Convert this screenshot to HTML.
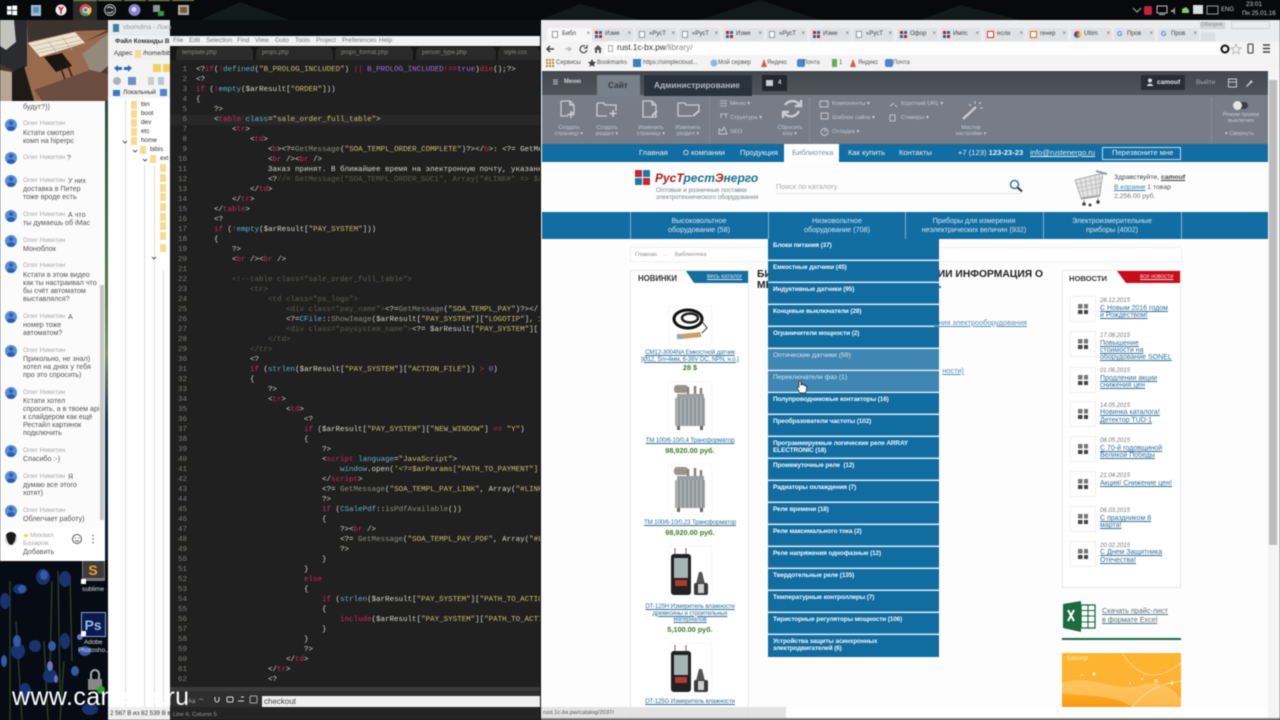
<!DOCTYPE html>
<html lang="ru">
<head>
<meta charset="utf-8">
<title>Screen</title>
<style>
html,body{margin:0;padding:0;width:1280px;height:720px;overflow:hidden;background:#0b0f10}
body{font-family:"Liberation Sans","Noto Sans CJK JP",sans-serif;position:relative}
.b{position:absolute;display:block}
.t{position:absolute;white-space:nowrap;line-height:8px;font-size:7px}
.c{transform:translateX(-50%);text-align:center}
#wrap{position:absolute;left:0;top:0;width:1280px;height:720px;overflow:hidden;filter:blur(.4px)}
/* chat */
.n{color:#a6a6a6;font-size:6.6px}
.m{color:#555;font-size:7.1px}
.av{position:absolute;left:5px;width:12px;height:12px;border-radius:50%;background:#5b8fd8;overflow:hidden}
.av:before{content:"";position:absolute;left:4px;top:2px;width:4px;height:4px;border-radius:50%;background:#2d5fb0}
.av:after{content:"";position:absolute;left:2px;top:7px;width:8px;height:6px;border-radius:50%;background:#2d5fb0}
/* folder */
.f{position:absolute;width:6px;height:8px;background:#f6dc92}
/* code */
#code{position:absolute;left:196px;top:65px;margin:0;font:7.5px/10px "Liberation Mono","Noto Sans CJK JP",monospace;color:#d6d6cc;white-space:pre;width:344px;height:625px;overflow:hidden}
#nums{position:absolute;left:170px;top:65px;width:17px;margin:0;font:7.5px/10px "Liberation Mono",monospace;color:#7b7b74;text-align:right;white-space:pre}
#code i{font-style:normal}
.r{color:#d9245c}.y{color:#c6c06e}.k{color:#5cb4c8}.p{color:#9a6fd8}.g{color:#5c5c53}.w{color:#8e8e84}
.tab{position:absolute;top:47px;height:13px;background:#2a2a2a;border-radius:5px 5px 0 0;color:#8a8a82;font-size:6px;line-height:13px;padding-left:6px;box-sizing:border-box}
.sm{position:absolute;top:37px;color:#777;font-size:6.4px;line-height:8px;white-space:nowrap}
/* chrome tabs */
.ct{position:absolute;top:28px;height:13px;width:41px;font-size:6px;line-height:13px;color:#444;background:#e0e1e3;border-radius:3px 3px 0 0;box-sizing:border-box;padding-left:13px;white-space:nowrap;overflow:hidden}
.ct u{position:absolute;right:2px;top:0;text-decoration:none;color:#666}
.ct s{position:absolute;left:3px;top:3px;width:7px;height:7px;text-decoration:none}
.fav{background:
 linear-gradient(#c01c1c,#c01c1c) 0 0/3px 3px no-repeat,
 linear-gradient(#156ea3,#156ea3) 4px 0/3px 3px no-repeat,
 linear-gradient(#156ea3,#156ea3) 0 4px/3px 3px no-repeat,
 linear-gradient(#c01c1c,#c01c1c) 4px 4px/3px 3px no-repeat}
.pg{background:#fff;border:1px solid #999;box-sizing:border-box;width:6px!important}
/* admin */
.al{color:#c6cbd0;font-size:5.6px;line-height:6px}
.am{color:#c6cbd0;font-size:5.8px}
/* nav */
.nv{color:#e8f1f7;font-size:7.6px;top:149px}
.cat{color:#d6e6f0;font-size:7.2px;line-height:8.5px;top:217px;text-align:center;transform:translateX(-50%)}
.mi{position:absolute;left:768px;width:171px;height:21px;background:#116ca0;border-bottom:1px solid #5d9fc6;color:#f4f8fb;font-size:6.4px;line-height:6.6px;padding:4px 4px 0 5px;box-sizing:border-box;font-weight:700;letter-spacing:-.1px}
.mi.l{background:#3f86b2;color:#d8e8f2;font-weight:400;font-size:6.8px;letter-spacing:0}
.pc{color:#2f6f98;text-decoration:underline;font-size:6.2px;letter-spacing:-.15px;line-height:6.5px;left:690px;transform:translateX(-50%);text-align:center}
.pr{color:#3b7f2a;font-size:7.3px;font-weight:700;left:690px;transform:translateX(-50%)}
.thumb{position:absolute;left:1070px;width:26px;height:26px;background:#fff;border:1px solid #eee;box-sizing:border-box}
.thumb:after{content:"";position:absolute;left:7px;top:7px;width:10px;height:10px;background:
 linear-gradient(#777,#777) 0 0/4.5px 4.5px no-repeat,
 linear-gradient(#777,#777) 100% 0/4.5px 4.5px no-repeat,
 linear-gradient(#444,#444) 0 100%/4.5px 4.5px no-repeat,
 linear-gradient(#444,#444) 100% 100%/4.5px 4.5px no-repeat}
.nd{left:1100px;color:#777;font-size:6px;font-style:italic;margin-top:1px}
.nt{left:1100px;color:#2f6f98;text-decoration:underline;font-size:7px;margin-top:1px}
</style>
</head>
<body>
<div id="wrap">

<!-- taskbar -->
<div class="b" style="left:0;top:0;width:1280px;height:20px;background:#07090a"></div>
<svg class="b" style="left:200px;top:0" width="1080" height="20"><g fill="#14191a"><path d="M0 20L40 2 90 20zM340 20L380 4 440 20zM500 20L560 0 620 20zM720 20L760 5 820 20z"/></g></svg>
<div class="b" style="left:73px;top:0;width:24px;height:20px;background:#2b2b2b"></div>
<div class="b" style="left:73px;top:0;width:24px;height:1px;background:#8da05a"></div>
<div class="b" style="left:98px;top:0;width:24px;height:1px;background:#8da05a"></div>
<div class="b" style="left:124px;top:0;width:22px;height:1px;background:#8da05a"></div>
<div class="b" style="left:148px;top:0;width:22px;height:1px;background:#8da05a"></div>
<div class="b" style="left:172px;top:0;width:22px;height:1px;background:#8da05a"></div>
<svg class="b" style="left:0;top:0" width="200" height="20">
<g fill="#fff"><rect x="7" y="6" width="4.5" height="4"/><rect x="12.2" y="5.500" width="5" height="4.500"/><rect x="7" y="10.700" width="4.500" height="4"/><rect x="12.200" y="10.700" width="5" height="4.500"/></g>
<rect x="31" y="5" width="10" height="11" fill="#9fc0d8"/><rect x="33" y="7" width="6" height="6" fill="#5f8fb5"/>
<circle cx="61" cy="10" r="5.500" fill="#eee"/><path d="M59 6.500L61 10.500 63 6.500M61 10.500V14" stroke="#d2232a" stroke-width="1.600" fill="none"/>
<circle cx="85.500" cy="10" r="6" fill="#dd4b39"/><path d="M85.500 10L80.300 13 A6 6 0 0 0 88.500 15.200z" fill="#3aa757"/><path d="M85.500 10L88.500 15.200A6 6 0 0 0 90.700 7z" fill="#fbc02d"/><circle cx="85.500" cy="10" r="2.600" fill="#4285f4" stroke="#fff" stroke-width=".8"/>
<circle cx="110" cy="10" r="5.500" fill="#222" stroke="#bbb" stroke-width="1"/><path d="M107 8a4 4 0 0 1 6 1M113 11a4 4 0 0 1-6 1" stroke="#ddd" fill="none"/>
<circle cx="134.500" cy="10" r="6" fill="#8a7fd0"/><circle cx="134" cy="9.500" r="2.500" fill="#d8d4f2"/>
<rect x="153" y="5" width="7" height="7" fill="#8a929a"/><rect x="158" y="11" width="6" height="5" fill="#2e9b3a"/>
<rect x="178" y="5" width="11" height="10" fill="#b9b09a"/><rect x="180" y="7" width="7" height="6" fill="#6b5e49"/>
</svg>
<!-- tray -->
<svg class="b" style="left:1130px;top:4px" width="90" height="14">
<path d="M3 4l4 4 4-4" stroke="#aaa" fill="none"/>
<rect x="14" y="2" width="8" height="9" rx="2" fill="#c8203a"/>
<rect x="27" y="2" width="10" height="7" fill="none" stroke="#bbb"/><rect x="29" y="10" width="6" height="1" fill="#bbb"/>
<path d="M41 6h2l2-3v8l-2-3h-2z" fill="#999"/>
<path d="M52 5l4-2 3 3v3h-7z" fill="#8ec07a"/>
<rect x="63" y="1" width="10" height="9" fill="#ddd"/>
<rect x="77" y="2" width="11" height="8" fill="none" stroke="#999"/>
</svg>
<div class="t" style="left:1221px;top:6px;color:#ccc;font-size:6px">ENG</div>
<div class="t" style="left:1246px;top:1px;color:#ccc;font-size:6.400px">23:01</div>
<div class="t" style="left:1242px;top:10px;color:#ccc;font-size:6.200px">Пн 25.01.16</div>

<!-- webcam -->
<svg class="b" style="left:0;top:20px" width="108" height="81">
<rect width="108" height="81" fill="#4a3a30"/>
<path d="M12 0H108V10L84 22 108 12V30L70 81H30L12 40z" fill="#9a6a4e"/>
<path d="M0 0H27V46L16 52 0 44z" fill="#2b2c30"/>
<path d="M0 0H14L16 22 6 30 0 26z" fill="#c4c4bf"/>
<path d="M27 0H108V10L76 11 28 22z" fill="#3a332e"/>
<path d="M28 23L75 12 85 23 40 37z" fill="#ece3cf"/>
<path d="M33 26L78 16M36 30L82 20M38 33L84 23M48 21L58 34M62 17L72 30" stroke="#bfb39b" stroke-width=".7"/>
<path d="M44 37L62 33 72 46 56 52z" fill="#1a1614"/>
<path d="M82 34L108 14V46L94 58z" fill="#948a7b"/>
<path d="M0 50L12 52 12 81H0z" fill="#b6a694"/>
<path d="M12 52L24 46 34 81H12z" fill="#1d1a18"/>
<path d="M66 42L78 70M60 46L72 78" stroke="#2a211c" stroke-width="1.500"/>
<path d="M34 70L90 50 108 54V81H42z" fill="#6b4d3f"/>
</svg>

<!-- chat -->
<div class="b" style="left:0;top:101px;width:105px;height:459px;background:#fbfbfb"></div>
<div class="b" style="left:105px;top:101px;width:3px;height:459px;background:linear-gradient(#2c4a3a,#5d7a52 45%,#7a8a6a 55%,#18304a 70%,#0a1a30)"></div>
<div class="b" style="left:100px;top:285px;width:4px;height:235px;background:#c4c4c4"></div>
<div class="t m" style="left:23px;top:103px">будут?))</div>

<div class="av" style="top:119px"></div><div class="t n" style="left:23px;top:120px">Олег Никитин</div>
<div class="t m" style="left:23px;top:129px">Кстати смотрел</div><div class="t m" style="left:23px;top:137px">комп на hiperpc</div>

<div class="av" style="top:152px"></div><div class="t n" style="left:23px;top:154px">Олег Никитин</div><div class="t m" style="left:67px;top:154px">?</div>

<div class="av" style="top:175px"></div><div class="t n" style="left:23px;top:177px">Олег Никитин</div><div class="t m" style="left:68px;top:177px">У них</div>
<div class="t m" style="left:23px;top:185px">доставка в Питер</div><div class="t m" style="left:23px;top:193px">тоже вроде есть</div>

<div class="av" style="top:210px"></div><div class="t n" style="left:23px;top:211px">Олег Никитин</div><div class="t m" style="left:68px;top:211px">А что</div>
<div class="t m" style="left:23px;top:219px">ты думаешь об iMac</div>

<div class="av" style="top:235px"></div><div class="t n" style="left:23px;top:237px">Олег Никитин</div><div class="t m" style="left:23px;top:245px">Моноблок</div>

<div class="av" style="top:261px"></div><div class="t n" style="left:23px;top:262px">Олег Никитин</div>
<div class="t m" style="left:23px;top:271px">Кстати в этом видео</div><div class="t m" style="left:23px;top:279px">как ты настраивал что</div><div class="t m" style="left:23px;top:287px">бы счёт автоматом</div><div class="t m" style="left:23px;top:295px">выставлялся?</div>

<div class="av" style="top:311px"></div><div class="t n" style="left:23px;top:313px">Олег Никитин</div><div class="t m" style="left:68px;top:313px">А</div>
<div class="t m" style="left:23px;top:321px">номер тоже</div><div class="t m" style="left:23px;top:329px">автоматом?</div>

<div class="av" style="top:345px"></div><div class="t n" style="left:23px;top:347px">Олег Никитин</div>
<div class="t m" style="left:23px;top:355px">Прикольно, не знал)</div><div class="t m" style="left:23px;top:363px">хотел на днях у тебя</div><div class="t m" style="left:23px;top:371px">про это спросить)</div>

<div class="av" style="top:387px"></div><div class="t n" style="left:23px;top:389px">Олег Никитин</div>
<div class="t m" style="left:23px;top:397px">Кстати хотел</div><div class="t m" style="left:23px;top:405px">спросить, а в твоем api</div><div class="t m" style="left:23px;top:413px">к слайдером как ещё</div><div class="t m" style="left:23px;top:421px">Рестайл картинок</div><div class="t m" style="left:23px;top:429px">подключить</div>

<div class="av" style="top:445px"></div><div class="t n" style="left:23px;top:447px">Олег Никитин</div><div class="t m" style="left:23px;top:455px">Спасибо :-)</div>

<div class="av" style="top:471px"></div><div class="t n" style="left:23px;top:473px">Олег Никитин</div><div class="t m" style="left:68px;top:473px">Я</div>
<div class="t m" style="left:23px;top:481px">думаю все этого</div><div class="t m" style="left:23px;top:489px">хотят)</div>

<div class="av" style="top:505px"></div><div class="t n" style="left:23px;top:507px">Олег Никитин</div><div class="t m" style="left:23px;top:515px">Облегчает работу)</div>

<div class="b" style="left:0;top:528px;width:105px;height:33px;background:#fff"></div>
<svg class="b" style="left:3px;top:530px" width="100" height="20">
<circle cx="8" cy="9" r="6.500" fill="#ddd"/><path d="M3 5c2-4 8-4 10 0l-1 6-3 4-3-1-2-4z" fill="#1a1a1a"/>
<circle cx="74" cy="9" r="4.500" fill="none" stroke="#555"/><circle cx="72.300" cy="8" r=".6" fill="#555"/><circle cx="75.700" cy="8" r=".6" fill="#555"/><path d="M72 11h4" stroke="#555"/>
<circle cx="90" cy="5.500" r=".8" fill="#666"/><circle cx="90" cy="9" r=".8" fill="#666"/><circle cx="90" cy="12.500" r=".8" fill="#666"/>
</svg>
<div class="b" style="left:24px;top:534px;width:4px;height:3px;background:#f4d35e"></div>
<div class="t n" style="left:30px;top:532px">Михаил</div>
<div class="t n" style="left:23px;top:540px">Базаров</div>
<div class="t m" style="left:23px;top:548px">Добавить</div>

<!-- desktop flowers -->
<svg class="b" style="left:0;top:561px" width="108" height="159">
<rect width="108" height="159" fill="#070b14"/>
<g stroke="#2e4424" stroke-width="1.300" fill="none"><path d="M58 10L60 130M52 20L50 110M70 15L72 100M10 20V159M16 60L22 159M44 80L48 159M64 100L60 159"/></g>
<g fill="#1a3370"><ellipse cx="43" cy="16" rx="7" ry="8"/><ellipse cx="20" cy="28" rx="7" ry="5"/><ellipse cx="65" cy="18" rx="6" ry="8"/><ellipse cx="5" cy="40" rx="5" ry="8"/><ellipse cx="35" cy="85" rx="6" ry="6"/><ellipse cx="18" cy="90" rx="7" ry="8"/><ellipse cx="65" cy="80" rx="5" ry="8"/><ellipse cx="50" cy="115" rx="7" ry="7"/><ellipse cx="90" cy="148" rx="8" ry="6"/><ellipse cx="25" cy="130" rx="6" ry="8"/></g>
<g fill="#3558a8"><ellipse cx="17" cy="80" rx="4" ry="6"/><ellipse cx="52" cy="85" rx="4" ry="5"/><ellipse cx="22" cy="28" rx="4" ry="4"/><ellipse cx="44" cy="14" rx="4" ry="5"/><ellipse cx="85" cy="90" rx="6" ry="5"/><ellipse cx="75" cy="110" rx="4" ry="5"/><ellipse cx="4" cy="100" rx="3" ry="6"/></g>
<g fill="#6e74c0"><ellipse cx="50" cy="105" rx="3" ry="5"/><ellipse cx="56" cy="118" rx="2" ry="4"/><ellipse cx="80" cy="76" rx="3" ry="3"/></g>
<!-- sublime icon -->
<rect x="82" y="-2" width="23" height="22" rx="1" fill="#777"/><rect x="83" y="0" width="21" height="17" fill="#3c3c3c"/><text x="93" y="14" font-family="Liberation Sans" font-size="14" font-weight="700" fill="#f0a030" text-anchor="middle">S</text>
<rect x="81" y="18" width="5" height="5" fill="#fff"/>
<!-- ps -->
<rect x="81.500" y="51.500" width="24" height="24" fill="#0b1a4a" stroke="#7da7e0"/><text x="93" y="69" font-family="Liberation Sans" font-size="14" font-weight="700" fill="#8fbdf0" text-anchor="middle">Ps</text>
<rect x="81" y="70" width="5" height="5" fill="#fff"/>
<!-- lock -->
<rect x="88" y="118" width="14" height="11" fill="#888"/><path d="M91 118v-5a4 4 0 0 1 8 0v5" fill="none" stroke="#aaa" stroke-width="2"/><circle cx="101" cy="129" r="4" fill="#29a329"/>
</svg>
<div class="t" style="left:82px;top:586px;color:#ddd;font-size:6.400px">sublime</div>
<div class="t" style="left:84px;top:639px;color:#ddd;font-size:6.400px">Adobe</div>
<div class="t" style="left:78px;top:647px;color:#ddd;font-size:6.400px">Photosho...</div>

<!-- FileZilla-like -->
<div class="b" style="left:108px;top:20px;width:62px;height:700px;background:#fff"></div>
<div class="b" style="left:108px;top:20px;width:62px;height:16px;background:#e9ebee"></div>
<div class="b" style="left:113px;top:24px;width:6px;height:8px;background:#3d7f9e"></div>
<div class="t" style="left:123px;top:24px;color:#999;font-size:6.500px">vbomdina - Лока</div>
<div class="b" style="left:108px;top:36px;width:62px;height:24px;background:#f1f1f1"></div>
<div class="t" style="left:115px;top:38px;color:#333;font-size:6.400px;font-weight:700">Файл Команды В</div>
<div class="t" style="left:114px;top:50px;color:#333;font-size:6.400px">Адрес</div>
<div class="f" style="left:135px;top:50px"></div>
<div class="t" style="left:143px;top:50px;color:#333;font-size:6.400px">/home/bibi</div>
<div class="b" style="left:108px;top:60px;width:62px;height:38px;background:#f4f4f4"></div>
<svg class="b" style="left:108px;top:60px" width="62" height="40">
<path d="M6 8l4-3v2h4v3h-4v2zM24 8l-4-3v2h-4v3h4v2z" fill="#2f6fb3"/><rect x="45" y="4" width="8" height="8" fill="#f0d060"/><rect x="55" y="4" width="7" height="8" fill="#f0d060"/>
<circle cx="9" cy="21" r="4" fill="#aab2bb"/><rect x="20" y="17" width="8" height="8" fill="#6c91c0"/><rect x="40" y="17" width="6" height="8" fill="#ccc"/><rect x="50" y="17" width="6" height="8" fill="#b7c7d8"/>
<rect x="5" y="30" width="7" height="6" fill="#3a78c2"/>
</svg>
<div class="t" style="left:123px;top:89px;color:#333;font-size:6.400px">Локальный</div>
<div class="b" style="left:160px;top:89px;width:7px;height:7px;background:#4a86c8"></div>
<div class="b" style="left:125px;top:100px;width:1px;height:607px;background:#ddd"></div>
<div class="b" style="left:144px;top:165px;width:1px;height:542px;background:#ddd"></div>
<div class="b" style="left:154px;top:165px;width:1px;height:542px;background:#ddd"></div>
<div class="b" style="left:163px;top:270px;width:1px;height:437px;background:#ddd"></div>
<div class="f" style="left:131px;top:101px"></div><div class="t" style="left:141px;top:101px;color:#333;font-size:6.400px">bin</div>
<div class="f" style="left:131px;top:110px"></div><div class="t" style="left:141px;top:110px;color:#333;font-size:6.400px">boot</div>
<div class="f" style="left:131px;top:119px"></div><div class="t" style="left:141px;top:119px;color:#333;font-size:6.400px">dev</div>
<div class="f" style="left:131px;top:128px"></div><div class="t" style="left:141px;top:128px;color:#333;font-size:6.400px">etc</div>
<div class="f" style="left:131px;top:137px"></div><div class="t" style="left:141px;top:137px;color:#333;font-size:6.400px">home</div>
<div class="f" style="left:140px;top:146px"></div><div class="t" style="left:150px;top:146px;color:#333;font-size:6.400px">bibis</div>
<div class="f" style="left:150px;top:155px"></div><div class="t" style="left:160px;top:155px;color:#333;font-size:6.400px">ext</div>
<div class="f" style="left:160px;top:164px"></div><div class="f" style="left:160px;top:174px"></div><div class="f" style="left:160px;top:184px"></div><div class="f" style="left:160px;top:193px"></div><div class="f" style="left:160px;top:203px"></div><div class="f" style="left:160px;top:213px"></div><div class="f" style="left:160px;top:222px"></div><div class="f" style="left:160px;top:232px"></div><div class="f" style="left:160px;top:244px"></div>
<svg class="b" style="left:120px;top:136px" width="40" height="130"><path d="M3 5l2 2 2-2M13 14l2 2 2-2M23 23l2 2 2-2M32 121l2 2 2-2" stroke="#555" fill="none"/></svg>
<div class="b" style="left:108px;top:707px;width:62px;height:13px;background:#eee"></div>
<div class="t" style="left:110px;top:710px;color:#333;font-size:6.200px">2 567 B из 82 539 B в 1</div>

<!-- Sublime -->
<div class="b" style="left:170px;top:36px;width:370px;height:684px;background:#202020"></div>
<div class="b" style="left:170px;top:36px;width:370px;height:10px;background:#f2f2f2"></div>
<div class="sm" style="left:173px">File</div><div class="sm" style="left:189px">Edit</div><div class="sm" style="left:206px">Selection</div><div class="sm" style="left:237px">Find</div><div class="sm" style="left:255px">View</div><div class="sm" style="left:275px">Goto</div><div class="sm" style="left:295px">Tools</div><div class="sm" style="left:316px">Project</div><div class="sm" style="left:342px">Preferences</div><div class="sm" style="left:379px">Help</div>
<div class="b" style="left:170px;top:46px;width:370px;height:14px;background:#161616"></div>
<div class="tab" style="left:176px;width:77px;background:#2c2c2c">template.php</div>
<div class="tab" style="left:256px;width:77px">props.php</div>
<div class="tab" style="left:335px;width:78px">props_format.php</div>
<div class="tab" style="left:416px;width:80px">person_type.php</div>
<div class="tab" style="left:498px;width:42px">style.css</div>
<div class="b" style="left:170px;top:115px;width:370px;height:10px;background:#282828"></div>
<pre id="nums">1
2
3
4
5
6
7
8
9
10
11
12
13
14
15
16
17
18
19
20
21
22
23
24
25
26
27
28
29
30
31
32
33
34
35
36
37
38
39
40
41
42
43
44
45
46
47
48
49
50
51
52
53
54
55
56
57
58
59
60
61
62</pre>
<pre id="code">&lt;?<i class="r">if</i>(<i class="r">!</i><i class="k">defined</i>(<i class="y">"B_PROLOG_INCLUDED"</i>) <i class="r">||</i> <i class="p">B_PROLOG_INCLUDED</i><i class="r">!==</i><i class="p">true</i>)<i class="r">die</i>();?&gt;
&lt;?
<i class="r">if</i> (<i class="r">!</i><i class="k">empty</i>($arResult[<i class="y">"ORDER"</i>]))
{
    ?&gt;
    &lt;<i class="r">table</i> <i class="k">class</i>=<i class="y">"sale_order_full_table"</i>&gt;
        &lt;<i class="r">tr</i>&gt;
            &lt;<i class="r">td</i>&gt;
                &lt;<i class="r">b</i>&gt;&lt;?=<i class="w">GetMessage</i>(<i class="y">"SOA_TEMPL_ORDER_COMPLETE"</i>)?&gt;&lt;/<i class="r">b</i>&gt;: &lt;?= GetMessage("SOA_TEMPL_ORDER_
                &lt;<i class="r">br</i> /&gt;&lt;<i class="r">br</i> /&gt;
                Заказ принят. В ближайшее время на электронную почту, указанную
                &lt;?<i class="g">//= GetMessage("SOA_TEMPL_ORDER_SUC1", Array("#LINK#" =&gt; $arParams</i>
            &lt;/<i class="r">td</i>&gt;
        &lt;/<i class="r">tr</i>&gt;
    &lt;/<i class="r">table</i>&gt;
    &lt;?
    <i class="r">if</i> (<i class="r">!</i><i class="k">empty</i>($arResult[<i class="y">"PAY_SYSTEM"</i>]))
    {
        ?&gt;
        &lt;<i class="r">br</i> /&gt;&lt;<i class="r">br</i> /&gt;

        <i class="g">&lt;!--table class="sale_order_full_table"&gt;</i>
            <i class="g">&lt;tr&gt;</i>
                <i class="g">&lt;td class="ps_logo"&gt;</i>
                    <i class="g">&lt;div class="pay_name"&gt;</i>&lt;?=<i class="w">GetMessage</i>(<i class="y">"SOA_TEMPL_PAY"</i>)?&gt;&lt;/
                    &lt;?=<i class="k">CFile</i>::<i class="w">ShowImage</i>($arResult[<i class="y">"PAY_SYSTEM"</i>][<i class="y">"LOGOTIP"</i>], 1
                    <i class="g">&lt;div class="paysystem_name"&gt;</i>&lt;?= $arResult[<i class="y">"PAY_SYSTEM"</i>][
                <i class="g">&lt;/td&gt;</i>
            <i class="g">&lt;/tr&gt;</i>
            &lt;?
            <i class="r">if</i> (<i class="k">strlen</i>($arResult[<i class="y">"PAY_SYSTEM"</i>][<i class="y">"ACTION_FILE"</i>]) <i class="r">&gt;</i> <i class="p">0</i>)
            {
                ?&gt;
                &lt;<i class="r">tr</i>&gt;
                    &lt;<i class="r">td</i>&gt;
                        &lt;?
                        <i class="r">if</i> ($arResult[<i class="y">"PAY_SYSTEM"</i>][<i class="y">"NEW_WINDOW"</i>] <i class="r">==</i> <i class="y">"Y"</i>)
                        {
                            ?&gt;
                            &lt;<i class="r">script</i> <i class="k">language</i>=<i class="y">"JavaScript"</i>&gt;
                                <i class="k">window</i>.open(<i class="y">'&lt;?=$arParams["PATH_TO_PAYMENT"]</i>
                            &lt;/<i class="r">script</i>&gt;
                            &lt;?= <i class="w">GetMessage</i>(<i class="y">"SOA_TEMPL_PAY_LINK"</i>, Array(<i class="y">"#LINK</i>
                            ?&gt;
                            <i class="r">if</i> (<i class="k">CSalePdf</i>::<i class="w">isPdfAvailable</i>())
                            {
                                ?&gt;&lt;<i class="r">br</i> /&gt;
                                &lt;?= <i class="w">GetMessage</i>(<i class="y">"SOA_TEMPL_PAY_PDF"</i>, Array(<i class="y">"#LI</i>
                                ?&gt;
                            }
                        }
                        <i class="r">else</i>
                        {
                            <i class="r">if</i> (<i class="k">strlen</i>($arResult[<i class="y">"PAY_SYSTEM"</i>][<i class="y">"PATH_TO_ACTION"</i>
                            {
                                <i class="r">include</i>($arResult[<i class="y">"PAY_SYSTEM"</i>][<i class="y">"PATH_TO_ACTI</i>
                            }
                        }
                        ?&gt;
                    &lt;/<i class="r">td</i>&gt;
                &lt;/<i class="r">tr</i>&gt;
                &lt;?</pre>
<div class="b" style="left:170px;top:687px;width:370px;height:4px;background:#3a3a3a"></div>
<div class="b" style="left:170px;top:691px;width:370px;height:16px;background:#2e2e2e"></div>
<div class="t" style="left:188px;top:698px;color:#aaa;font-size:6px">Aa</div>
<div class="t" style="left:199px;top:698px;color:#aaa;font-size:6px">""</div>
<svg class="b" style="left:186px;top:694px" width="75" height="12"><g fill="none" stroke="#ddd"><path d="M29 3v3a2 2 0 0 0 4 0v-3"/><rect x="41" y="3" width="6" height="5" rx="1"/><path d="M52 7h6M55 3h3"/><rect x="64" y="2" width="7" height="7" rx="1" stroke="#aaa"/></g></svg>
<div class="b" style="left:262px;top:696px;width:278px;height:11px;background:#efefef"></div>
<div class="t" style="left:264px;top:698px;color:#444;font-size:8px">checkout</div>
<div class="b" style="left:170px;top:707px;width:370px;height:13px;background:#242424"></div>
<div class="t" style="left:173px;top:711px;color:#999;font-size:5.800px">Line 6, Column 5</div>

<!-- watermark -->
<div class="t" style="left:12px;top:686px;color:#fff;font-size:25px;line-height:22px;letter-spacing:.4px;z-index:5">www.camera.ru</div>

<!-- Chrome -->
<div class="b" style="left:541px;top:20px;width:739px;height:700px;background:#fff"></div>
<div class="b" style="left:541px;top:20px;width:739px;height:22px;background:#ebecee"></div>
<div class="b" style="left:1200px;top:22px;width:25px;height:7px;background:#d8d8d8;border:1px solid #ccc;box-sizing:border-box"></div>
<div class="t" style="left:1201px;top:21px;color:#888;font-size:5.500px">Обзорне</div>
<div class="b" style="left:1231px;top:21px;width:39px;height:8px;border:1px solid #cfcfcf;box-sizing:border-box"></div>

<div class="ct" style="left:547px;background:#f7f7f7;height:14px;width:45px"><s class="pg" style="left:5px"></s><span style="margin-left:2px">Библ</span><u>×</u></div>
<div class="ct" style="left:592px"><s class="fav"></s>Изме<u>×</u></div>
<div class="ct" style="left:636px"><s class="pg"></s>«РусТ<u>×</u></div>
<div class="ct" style="left:679px"><s class="pg"></s>«РусТ<u>×</u></div>
<div class="ct" style="left:723px"><s class="fav"></s>Изме<u>×</u></div>
<div class="ct" style="left:766px"><s class="pg"></s>«РусТ<u>×</u></div>
<div class="ct" style="left:810px"><s class="fav"></s>Изме<u>×</u></div>
<div class="ct" style="left:853px"><s class="pg"></s>«РусТ<u>×</u></div>
<div class="ct" style="left:897px"><s class="fav"></s>Офор<u>×</u></div>
<div class="ct" style="left:940px"><s class="fav"></s>Импс<u>×</u></div>
<div class="ct" style="left:984px"><s style="background:#fff;border:1px solid #d33;box-sizing:border-box"></s>если<u>×</u></div>
<div class="ct" style="left:1027px"><s style="background:#fff;border:1px solid #d60;box-sizing:border-box"></s>генер<u>×</u></div>
<div class="ct" style="left:1071px"><s style="border-radius:50%;background:conic-gradient(#e33,#fc3,#3a3,#33d,#e33)"></s>Ultim<u>×</u></div>
<div class="ct" style="left:1114px"><s style="color:#4285f4;font:700 7px/7px 'Liberation Sans'">G</s>Пров<u>×</u></div>
<div class="ct" style="left:1158px"><s style="color:#4285f4;font:700 7px/7px 'Liberation Sans'">G</s>Пров<u>×</u></div>
<div class="b" style="left:1201px;top:32px;width:14px;height:9px;background:#dcdde0"></div>

<!-- toolbar -->
<div class="b" style="left:541px;top:42px;width:739px;height:14px;background:#f4f4f4"></div>
<div class="b" style="left:605px;top:42px;width:615px;height:13px;background:#fff"></div>
<svg class="b" style="left:541px;top:42px" width="70" height="14"><path d="M6 7h7M9 4L6 7l3 3" stroke="#444" stroke-width="1.500" fill="none"/><path d="M24 7h6M27 5l3 2-3 2" stroke="#bbb" stroke-width="1.300" fill="none"/><path d="M44 4a3.500 3.500 0 1 0 2 4M46 3v3h-3" stroke="#444" stroke-width="1.200" fill="none"/><path d="M53 7l4-4 4 4M54 7v4h2V8h2v3h2V7" fill="#555"/></svg>
<div class="b" style="left:608px;top:45px;width:5px;height:7px;border:1px solid #aaa;box-sizing:border-box"></div>
<div class="t" style="left:617px;top:44px;font-size:8.200px;color:#333">rust.1c-bx.pw<span style="color:#888">/library/</span></div>
<svg class="b" style="left:1218px;top:42px" width="62" height="14"><circle cx="7" cy="7" r="3.500" fill="none" stroke="#111" stroke-width="2"/><path d="M18 2l1.500 3.500 3.500.4-2.700 2.300.8 3.500-3.100-1.800-3.100 1.800.8-3.500L13 5.900l3.500-.4z" fill="none" stroke="#bbb"/><rect x="30" y="2" width="5" height="9" rx="1" fill="none" stroke="#555" stroke-width="1.300"/><path d="M45 3h7M45 6.500h7M45 10h7" stroke="#444" stroke-width="1.400"/></svg>

<!-- bookmarks -->
<div class="b" style="left:541px;top:56px;width:739px;height:14px;background:#f3f3f3"></div>
<svg class="b" style="left:545px;top:58px" width="360" height="10">
<g fill="#b8862e"><rect x="1" y="1" width="2" height="2"/><rect x="4" y="1" width="2" height="2"/><rect x="7" y="1" width="2" height="2"/><rect x="1" y="4" width="2" height="2"/><rect x="4" y="4" width="2" height="2"/><rect x="7" y="4" width="2" height="2"/><rect x="1" y="7" width="2" height="2"/><rect x="4" y="7" width="2" height="2"/><rect x="7" y="7" width="2" height="2"/></g>
<path d="M47 1l1.300 2.700 2.900.3-2.200 2 .7 2.900-2.700-1.500-2.700 1.500.7-2.900-2.200-2 2.900-.3z" fill="#444"/>
<rect x="88" y="1" width="8" height="8" fill="#3a7fb8"/>
<circle cx="169" cy="5" r="3.500" fill="#8fb7d8"/>
<path d="M219 1l3 8h-6z" fill="#d9564c"/>
<rect x="252" y="1" width="8" height="8" rx="2" fill="#4a86c8"/>
<rect x="287" y="1" width="5" height="8" fill="#5cae5a"/>
<path d="M308 1l3 8h-6z" fill="#d9564c"/>
<rect x="340" y="1" width="8" height="8" rx="2" fill="#4a86c8"/>
</svg>
<div class="t" style="left:556px;top:59px;color:#555;font-size:6px">Сервисы</div>
<div class="t" style="left:597px;top:59px;color:#555;font-size:6px">Bookmarks</div>
<div class="t" style="left:643px;top:59px;color:#555;font-size:6px">https://simplecloud...</div>
<div class="t" style="left:718px;top:59px;color:#555;font-size:6px">Мой сервер</div>
<div class="t" style="left:767px;top:59px;color:#555;font-size:6px">Яндекс</div>
<div class="t" style="left:803px;top:59px;color:#555;font-size:6px">Почта</div>
<div class="t" style="left:839px;top:59px;color:#555;font-size:6px">1</div>
<div class="t" style="left:858px;top:59px;color:#555;font-size:6px">Яндекс</div>
<div class="t" style="left:893px;top:59px;color:#555;font-size:6px">Почта</div>

<!-- scrollbar -->
<div class="b" style="left:1268px;top:70px;width:12px;height:650px;background:#f4f4f4"></div>
<div class="b" style="left:1269px;top:80px;width:8px;height:465px;background:#bdbdbd"></div>

<!-- admin panel -->
<div class="b" style="left:542px;top:71px;width:726px;height:25px;background:linear-gradient(#43484e,#51565c)"></div>
<div class="b" style="left:542px;top:95px;width:726px;height:49px;background:#767d87"></div>
<div class="b" style="left:597px;top:75px;width:43px;height:21px;background:#78808a"></div>
<div class="b" style="left:644px;top:75px;width:108px;height:21px;background:#2a323e"></div>
<div class="t" style="left:608px;top:81px;color:#33383e;font-size:8.300px;font-weight:700">Сайт</div>
<div class="t" style="left:654px;top:81px;color:#b3bac4;font-size:8.300px;font-weight:700">Администрирование</div>
<svg class="b" style="left:553px;top:79px" width="6" height="6"><path d="M0 1h5M0 3h5M0 5h5" stroke="#bbb"/></svg>
<div class="t" style="left:564px;top:78px;color:#ccd0d5;font-size:6px;font-weight:700">Меню</div>
<div class="b" style="left:762px;top:75px;width:25px;height:16px;background:#23282f;border-radius:1px"></div>
<div class="b" style="left:766px;top:80px;width:7px;height:6px;background:#c8cdd2"></div>
<div class="t" style="left:778px;top:79px;color:#ddd;font-size:6px;font-weight:700">4</div>
<div class="b" style="left:1141px;top:75px;width:44px;height:15px;background:#2a2f37;border-radius:1px"></div>
<div class="t" style="left:1157px;top:79px;color:#e6e6e6;font-size:6.500px;font-weight:700">camouf</div>
<svg class="b" style="left:1146px;top:78px" width="8" height="8"><circle cx="4" cy="2.500" r="2" fill="#ddd"/><path d="M1 8c0-3 6-3 6 0z" fill="#ddd"/></svg>
<div class="t" style="left:1196px;top:79px;color:#a6adb5;font-size:6.500px">Выйти</div>
<svg class="b" style="left:1227px;top:76px" width="30" height="14"><rect x="1.500" y="3" width="8" height="8" fill="none" stroke="#c6cbd0"/><path d="M1.500 6h8" stroke="#c6cbd0"/><path d="M19 10l3-3 2-3 2 2-3 2-3 3z" fill="#c6cbd0"/></svg>

<svg class="b" style="left:555px;top:96px" width="440" height="30" fill="none" stroke="#c9cdd2" stroke-width="1.300">
<path d="M6 5h9l4 4v8h-3M6 5v15h7" /><path d="M15 5v4h4M16 15v7M12.500 18.500h7" stroke-width="1.600"/>
<path d="M42 7v13h10M42 7h7l1 2h11v6" /><path d="M58 14v7M54.500 17.500h7" stroke-width="1.600"/>
<path d="M88 5h9l4 4v12h-13zM97 5v4h4"/><path d="M97 20l5-5" stroke-width="2"/>
<path d="M123 7v13h14M123 7h7l1 2h13v7"/><path d="M138 20l6-5" stroke-width="2"/>
<path d="M165 8h7M165 10.500h7M165 13h7" stroke-width=".8" transform="translate(0,-3)"/>
<path d="M166 22v-4h5v4M165 18h8" stroke-width=".8"/>
<path d="M235 8a9 9 0 0 1 13-2l2 2M245 9h6V3" stroke-width="2.400" transform="translate(-5,1)"/>
<path d="M248 14a9 9 0 0 1-13 4l-2-2M238 15h-6v6" stroke-width="2.400" transform="translate(-4,1)"/>
<rect x="265" y="5" width="8" height="6" stroke-width=".9"/><rect x="266" y="17" width="7" height="6" stroke-width=".9"/>
<path d="M335 10l4-3M340 9l2 2" stroke-width=".9"/><rect x="335" y="19" width="5" height="6" stroke-width=".9"/>
<path d="M408 23l13-12" stroke-width="2.400"/><path d="M420 5v3M426 6l-2 2M428 12h-3M414 8l2 2" stroke-width="1"/>
</svg>
<svg class="b" style="left:718px;top:124px" width="10" height="12" fill="none" stroke="#c9cdd2" stroke-width=".9"><path d="M1 10V5l3 2 2-4 3 7z"/></svg>
<svg class="b" style="left:820px;top:127px" width="10" height="10" fill="none" stroke="#c9cdd2" stroke-width=".9"><circle cx="4.500" cy="5" r="3.500"/><path d="M4.500 5l1-2"/></svg>

<div class="t al c" style="left:569px;top:125px">Создать<br>страницу ▾</div>
<div class="t al c" style="left:607px;top:125px">Создать<br>раздел ▾</div>
<div class="t al c" style="left:651px;top:125px">Изменить<br>страницу ▾</div>
<div class="t al c" style="left:688px;top:125px">Изменить<br>раздел ▾</div>
<div class="t al c" style="left:790px;top:125px">Сбросить<br>кэш ▾</div>
<div class="t al c" style="left:971px;top:125px">Мастер<br>настройки ▾</div>
<div class="t am" style="left:730px;top:100px">Меню ▾</div>
<div class="t am" style="left:730px;top:114px">Структура ▾</div>
<div class="t am" style="left:730px;top:128px">SEO</div>
<div class="t am" style="left:832px;top:100px">Компоненты ▾</div>
<div class="t am" style="left:832px;top:114px">Шаблон сайта ▾</div>
<div class="t am" style="left:832px;top:128px">Отладка ▾</div>
<div class="t am" style="left:901px;top:100px">Короткий URL ▾</div>
<div class="t am" style="left:901px;top:114px">Стикеры ▾</div>
<div class="b" style="left:709px;top:98px;width:1px;height:44px;border-left:1px dotted #8f96a0"></div>
<div class="b" style="left:809px;top:98px;width:1px;height:44px;border-left:1px dotted #8f96a0"></div>
<div class="b" style="left:1211px;top:98px;width:1px;height:44px;border-left:1px dotted #8f96a0"></div>
<div class="b" style="left:1233px;top:102px;width:15px;height:7px;border-radius:4px;background:#3a3f46"></div>
<div class="b" style="left:1233px;top:101px;width:9px;height:9px;border-radius:50%;background:#e4e6e8"></div>
<div class="t al c" style="left:1241px;top:112px">Режим правки<br>выключен</div>
<div class="t al" style="left:1225px;top:131px">▾ Свернуть</div>

<!-- site white bg -->
<div class="b" style="left:542px;top:144px;width:726px;height:564px;background:#fdfdfd"></div>
<!-- nav -->
<div class="b" style="left:542px;top:144px;width:726px;height:18px;background:#126ea2"></div>
<div class="b" style="left:784px;top:144px;width:55px;height:18px;background:#fff"></div>
<div class="t nv" style="left:639px">Главная</div>
<div class="t nv" style="left:683px">О компании</div>
<div class="t nv" style="left:740px">Продукция</div>
<div class="t nv" style="left:792px;color:#7d8f9b">Библиотека</div>
<div class="t nv" style="left:848px">Как купить</div>
<div class="t nv" style="left:899px">Контакты</div>
<div class="t nv" style="left:958px">+7 (123) <b>123-23-23</b></div>
<div class="t nv" style="left:1030px;text-decoration:underline">info@rustenergo.ru</div>
<div class="b" style="left:1102px;top:147px;width:79px;height:13px;border:1px solid #bcdcee;box-sizing:border-box"></div>
<div class="t nv" style="left:1112px">Перезвоните мне</div>

<!-- logo -->
<div class="b" style="left:635px;top:170px;width:7px;height:7px;background:#c0282d"></div>
<div class="b" style="left:643px;top:170px;width:7px;height:7px;background:#1d7aa8"></div>
<div class="b" style="left:635px;top:178px;width:7px;height:7px;background:#1d7aa8"></div>
<div class="b" style="left:643px;top:178px;width:7px;height:7px;background:#c0282d"></div>
<div class="t" style="left:655px;top:174px;font-size:12px;font-weight:700;font-style:italic;color:#1a6f8e"><span style="color:#a81c1c">РусТ</span>рест<span style="color:#b01c1c">Э</span>нерго</div>
<div class="t" style="left:656px;top:187px;font-size:6.200px;color:#77808a">Оптовые и розничные поставки</div>
<div class="t" style="left:656px;top:194px;font-size:6.200px;color:#77808a">электротехнического оборудования</div>
<div class="t" style="left:776px;top:183px;font-size:7.300px;color:#a9a9a9">Поиск по каталогу</div>
<div class="b" style="left:776px;top:193px;width:246px;height:1px;background:#e4e4e4"></div>
<svg class="b" style="left:1008px;top:178px" width="16" height="16"><circle cx="6.500" cy="6.500" r="4" fill="none" stroke="#2f7fae" stroke-width="1.600"/><path d="M9.500 9.500l4.500 4" stroke="#333" stroke-width="2"/></svg>
<svg class="b" style="left:1072px;top:168px" width="38" height="40">
<path d="M24 3L35 6" stroke="#5a8fc0" stroke-width="1.500"/>
<path d="M3 12L31 5 28 27 9 30z" fill="#e4e4e4" stroke="#999" stroke-width=".7"/>
<path d="M8 10l4 20M13 9l3 20M18 8l3 20M23 7l2 20M27 6l1 21M4 16l27-6M5 20l25-5M6 24l23-5" stroke="#aaa" stroke-width=".6"/>
<path d="M9 31L28 28M12 32v3M26 30v3" stroke="#888"/>
<circle cx="12" cy="36" r="1.800" fill="#444"/><circle cx="26" cy="34" r="1.800" fill="#444"/><circle cx="18" cy="37" r="1.500" fill="#444"/>
</svg>
<div class="t" style="left:1114px;top:174px;font-size:6.800px;color:#444">Здравствуйте, <b style="text-decoration:underline">camouf</b></div>
<div class="t" style="left:1114px;top:184px;font-size:6.800px;color:#555"><span style="color:#2f7fae;text-decoration:underline">В корзине</span> 1 товар</div>
<div class="t" style="left:1114px;top:193px;font-size:6.800px;color:#777">2,256.00 руб.</div>

<!-- categories -->
<div class="b" style="left:542px;top:212px;width:726px;height:27px;background:#126ea2"></div>
<div class="b" style="left:630px;top:212px;width:1px;height:27px;background:#7fb4d2"></div>
<div class="b" style="left:768px;top:212px;width:1px;height:27px;background:#7fb4d2"></div>
<div class="b" style="left:905px;top:212px;width:1px;height:27px;background:#7fb4d2"></div>
<div class="b" style="left:1043px;top:212px;width:1px;height:27px;background:#7fb4d2"></div>
<div class="b" style="left:1181px;top:212px;width:1px;height:27px;background:#7fb4d2"></div>
<div class="t cat" style="left:699px">Высоковольтное<br>оборудование (58)</div>
<div class="t cat" style="left:837px">Низковольтное<br>оборудование (708)</div>
<div class="t cat" style="left:974px">Приборы для измерения<br>неэлектрических величин (932)</div>
<div class="t cat" style="left:1112px">Электроизмерительные<br>приборы (4002)</div>

<!-- breadcrumb -->
<div class="b" style="left:630px;top:247px;width:552px;height:15px;background:#fff;border:1px solid #f0f0f0;box-sizing:border-box"></div>
<div class="t" style="left:635px;top:251px;font-size:5.800px;color:#888">Главная</div>
<div class="t" style="left:662px;top:251px;font-size:5.800px;color:#bbb">→</div>
<div class="t" style="left:675px;top:251px;font-size:5.800px;color:#888">Библиотека</div>

<!-- left products -->
<div class="b" style="left:630px;top:270px;width:119px;height:450px;background:#fff;border:1px solid #e4e4e4;box-sizing:border-box"></div>
<div class="t" style="left:638px;top:275px;font-size:7.800px;font-weight:700;color:#333">НОВИНКИ</div>
<svg class="b" style="left:686px;top:271px" width="62" height="13"><path d="M0 0H62V12H8z" fill="#156da0"/></svg>
<div class="t" style="left:707px;top:273px;font-size:6px;color:#d6e8f3;text-decoration:underline">весь каталог</div>

<svg class="b" style="left:669px;top:306px" width="43" height="39"><rect width="43" height="39" fill="#fff" stroke="#eee"/><ellipse cx="19" cy="13" rx="14" ry="9" fill="none" stroke="#111" stroke-width="3"/><ellipse cx="21" cy="12" rx="8" ry="4.500" fill="none" stroke="#222" stroke-width="2.500"/><path d="M32 14l6 8-5 5" stroke="#333" fill="none"/><rect x="12" y="27" width="20" height="5" fill="#c9a26a" transform="rotate(-6 22 29)"/><rect x="8" y="28" width="5" height="5" fill="#8fa8c8"/></svg>
<div class="t pc" style="top:350px">CM12-3004NA Емкостной датчик<br>[Ø12, Sn=4мм, 6-36V DC, NPN, н.о.]</div>
<div class="t pr" style="top:364px">28 $</div>

<svg class="b" style="left:668px;top:382px" width="44" height="51"><rect width="44" height="51" fill="#fff" stroke="#f0f0f0"/><rect x="6" y="3" width="14" height="8" rx="3" fill="#9a9488"/><rect x="9" y="12" width="27" height="5" fill="#9aa0a3"/><rect x="7" y="16" width="30" height="28" fill="#a8adb0"/><path d="M11 16v28M15 16v28M19 16v28M23 16v28M27 16v28M31 16v28M35 16v28" stroke="#7e8285"/><path d="M20 5v7M27 4v8M33 6v6" stroke="#8a8278" stroke-width="2.500"/><rect x="9" y="44" width="3" height="4" fill="#666"/><rect x="32" y="44" width="3" height="4" fill="#666"/></svg>
<div class="t pc" style="top:438px">ТМ 100/6-10/0,4 Трансформатор</div>
<div class="t pr" style="top:447px">98,920.00 руб.</div>

<svg class="b" style="left:668px;top:464px" width="44" height="51"><rect width="44" height="51" fill="#fff" stroke="#f0f0f0"/><rect x="6" y="3" width="14" height="8" rx="3" fill="#9a9488"/><rect x="9" y="12" width="27" height="5" fill="#9aa0a3"/><rect x="7" y="16" width="30" height="28" fill="#a8adb0"/><path d="M11 16v28M15 16v28M19 16v28M23 16v28M27 16v28M31 16v28M35 16v28" stroke="#7e8285"/><path d="M20 5v7M27 4v8M33 6v6" stroke="#8a8278" stroke-width="2.500"/><rect x="9" y="44" width="3" height="4" fill="#666"/><rect x="32" y="44" width="3" height="4" fill="#666"/></svg>
<div class="t pc" style="top:520px">ТМ 100/6-10/0,23 Трансформатор</div>
<div class="t pr" style="top:529px">98,920.00 руб.</div>

<svg class="b" style="left:668px;top:546px" width="44" height="52"><rect width="44" height="52" fill="#fff" stroke="#f0f0f0"/><rect x="3" y="8" width="20" height="41" rx="3" fill="#222"/><rect x="6" y="12" width="14" height="20" fill="#a6b4b4"/><rect x="7" y="34" width="12" height="6" fill="#b23a32"/><path d="M7 8V2M18 8V2" stroke="#666"/><path d="M31 26h3l3 12h-9z" fill="#555"/><rect x="26" y="37" width="14" height="12" rx="2" fill="#3a3a3a"/><rect x="30" y="38" width="6" height="9" fill="#cfcfcf"/></svg>
<div class="t pc" style="top:604px;line-height:6.500px">DT-125H Измеритель влажности<br>древесины и строительных<br>материалов</div>
<div class="t pr" style="top:626px">5,100.00 руб.</div>

<svg class="b" style="left:668px;top:643px" width="44" height="52"><rect width="44" height="52" fill="#fff" stroke="#f0f0f0"/><rect x="3" y="8" width="20" height="41" rx="3" fill="#222"/><rect x="6" y="12" width="14" height="20" fill="#a6b4b4"/><rect x="7" y="34" width="12" height="6" fill="#b23a32"/><path d="M7 8V2M18 8V2" stroke="#666"/><path d="M31 26h3l3 12h-9z" fill="#555"/><rect x="26" y="37" width="14" height="12" rx="2" fill="#3a3a3a"/><rect x="30" y="38" width="6" height="9" fill="#cfcfcf"/></svg>
<div class="t pc" style="top:699px">DT-125G Измеритель влажности</div>

<!-- center text -->
<div class="t" style="left:757px;top:271px;font-size:10.300px;font-weight:700;color:#222">БИБЛИОТЕКА</div>
<div class="t" style="left:1043px;top:271px;transform:translateX(-100%);font-size:10.300px;font-weight:700;color:#222">ЦИИ ИНФОРМАЦИЯ О</div>
<div class="t" style="left:757px;top:282px;font-size:10.300px;font-weight:700;color:#222">МЕ</div>
<div class="b" style="left:939px;top:286px;width:2px;height:2px;background:#2f7fae"></div>
<div class="t" style="left:1027px;top:319px;transform:translateX(-100%);font-size:7.300px;color:#4f8db5;text-decoration:underline">ения электрооборудования</div>
<div class="t" style="left:964px;top:367px;transform:translateX(-100%);font-size:7.300px;color:#4f8db5;text-decoration:underline">ности)</div>

<!-- dropdown -->
<div class="mi" style="top:239px">Блоки питания (37)</div>
<div class="mi" style="top:261px">Емкостные датчики (45)</div>
<div class="mi" style="top:283px">Индуктивные датчики (95)</div>
<div class="mi" style="top:305px">Концевые выключатели (28)</div>
<div class="mi" style="top:327px">Ограничители мощности (2)</div>
<div class="mi l" style="top:349px">Оптические датчики (59)</div>
<div class="mi l" style="top:371px">Переключатели фаз (1)</div>
<div class="mi" style="top:393px">Полупроводниковые контакторы (16)</div>
<div class="mi" style="top:415px">Преобразователи частоты (102)</div>
<div class="mi" style="top:437px">Программируемые логические реле ARRAY ELECTRONIC (18)</div>
<div class="mi" style="top:459px">Промежуточные реле&nbsp; (12)</div>
<div class="mi" style="top:481px">Радиаторы охлаждения (7)</div>
<div class="mi" style="top:503px">Реле времени (18)</div>
<div class="mi" style="top:525px">Реле максимального тока (2)</div>
<div class="mi" style="top:547px">Реле напряжения однофазные (12)</div>
<div class="mi" style="top:569px">Твердотельные реле (135)</div>
<div class="mi" style="top:591px">Температурные контроллеры (7)</div>
<div class="mi" style="top:613px">Тиристорные регуляторы мощности (106)</div>
<div class="mi" style="top:635px;height:22px;border:0">Устройства защиты асинхронных электродвигателей (6)</div>
<svg class="b" style="left:796px;top:380px" width="12" height="14"><path d="M3 6V2a1 1 0 0 1 2 0v3h1V4h1.500v1H9v1h1.500v4l-1 3H4L1.500 8.500C1 7 2.500 6.500 3 7.500z" fill="#fff" stroke="#222" stroke-width=".7"/></svg>

<!-- news -->
<div class="b" style="left:1062px;top:270px;width:119px;height:318px;background:#fff;border:1px solid #e6e6e6;box-sizing:border-box"></div>
<div class="t" style="left:1069px;top:275px;font-size:7.600px;font-weight:700;color:#333">НОВОСТИ</div>
<svg class="b" style="left:1117px;top:271px" width="63" height="13"><path d="M0 0H63V12H9z" fill="#c80d1a"/></svg>
<div class="t" style="left:1140px;top:273px;font-size:6px;color:#f6d6d6;text-decoration:underline">все новости</div>

<div class="thumb" style="top:296px"></div><div class="t nd" style="top:296px">28.12.2015</div><div class="t nt" style="top:304px">С Новым 2016 годом</div><div class="t nt" style="top:311px">и Рождеством!</div>
<div class="thumb" style="top:331px"></div><div class="t nd" style="top:331px">17.08.2015</div><div class="t nt" style="top:339px">Повышение</div><div class="t nt" style="top:346px">стоимости на</div><div class="t nt" style="top:353px">оборудование SONEL</div>
<div class="thumb" style="top:367px"></div><div class="t nd" style="top:366px">01.06.2015</div><div class="t nt" style="top:374px">Продлении акции</div><div class="t nt" style="top:381px">снижения цен</div>
<div class="thumb" style="top:401px"></div><div class="t nd" style="top:401px">14.05.2015</div><div class="t nt" style="top:408px">Новинка каталога!</div><div class="t nt" style="top:416px">Детектор TUD-1</div>
<div class="thumb" style="top:436px"></div><div class="t nd" style="top:436px">08.05.2015</div><div class="t nt" style="top:444px">С 70-й годовщиной</div><div class="t nt" style="top:451px">Великой Победы</div>
<div class="thumb" style="top:471px"></div><div class="t nd" style="top:471px">21.04.2015</div><div class="t nt" style="top:479px">Акция! Снижение цен!</div>
<div class="thumb" style="top:506px"></div><div class="t nd" style="top:506px">06.03.2015</div><div class="t nt" style="top:514px">С праздником 8</div><div class="t nt" style="top:521px">марта!</div>
<div class="thumb" style="top:541px"></div><div class="t nd" style="top:541px">20.02.2015</div><div class="t nt" style="top:548px">С Днем Защитника</div><div class="t nt" style="top:556px">Отечества!</div>

<!-- excel -->
<svg class="b" style="left:1062px;top:600px" width="35" height="33"><path d="M1 4L19 1V32L1 28z" fill="#1c6b41"/><rect x="19" y="5" width="14" height="23" fill="#fff" stroke="#1c6b41" stroke-width="1.300"/><path d="M19 10.500h14M19 16h14M19 22h14M26 5v23" stroke="#1c6b41" stroke-width="1.100"/><path d="M6 10l6 11M12 10L6 21" stroke="#fff" stroke-width="2"/></svg>
<div class="t" style="left:1102px;top:607px;font-size:7.200px;color:#55707a;text-decoration:underline">Скачать прайс-лист</div>
<div class="t" style="left:1102px;top:616px;font-size:7.200px;color:#55707a;text-decoration:underline">в формате Excel</div>
<div class="b" style="left:1062px;top:638px;width:119px;height:2px;background:#136b46"></div>

<!-- banner -->
<svg class="b" style="left:1062px;top:653px" width="119" height="54">
<defs><linearGradient id="og" x1="0" y1="0" x2="0" y2="1"><stop offset="0" stop-color="#ffb52e"/><stop offset=".6" stop-color="#fdb235"/><stop offset="1" stop-color="#f79a12"/></linearGradient></defs>
<rect width="119" height="54" fill="url(#og)"/>
<path d="M0 30C30 20 50 40 80 32 100 26 110 35 119 45V54H70C50 40 20 44 0 40z" fill="#ffd68a" opacity=".5"/>
<path d="M60 0C80 30 100 25 119 10M70 54C90 30 110 30 119 28" stroke="#ffe3ad" fill="none" opacity=".7"/>
<g fill="#fff3c8"><circle cx="32" cy="21" r="1.500"/><circle cx="20" cy="22" r="1"/><circle cx="94" cy="28" r="1.500"/><circle cx="110" cy="30" r="1.500"/><circle cx="68" cy="30" r="1"/><circle cx="80" cy="26" r="1"/></g>
</svg>
<div class="t" style="left:1067px;top:655px;font-size:6px;color:#fdeccc">Баннер</div>

<!-- status bubble -->
<div class="b" style="left:541px;top:707px;width:245px;height:11px;background:rgba(225,225,225,.92)"></div>
<div class="t" style="left:543px;top:709px;font-size:5.800px;color:#555">rust.1c-bx.pw/catalog/2037/</div>
<div class="b" style="left:541px;top:718px;width:739px;height:2px;background:#8c8c8c"></div>

</div>
</body>
</html>
